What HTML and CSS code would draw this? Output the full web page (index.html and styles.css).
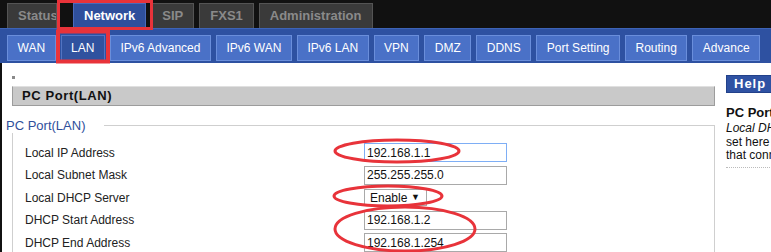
FILE: index.html
```html
<!DOCTYPE html>
<html lang="en">
<head>
    <meta charset="UTF-8">
    <title>Network - LAN</title>
    <link rel="stylesheet" href="styles.css">
</head>
<body>
    <div class="topbar">
        <a class="tab tab-first">Status</a>
        <a class="tab active">Network</a>
        <a class="tab">SIP</a>
        <a class="tab">FXS1</a>
        <a class="tab">Administration</a>
    </div>
    <div class="subnav">
        <a>WAN</a>
        <a class="current">LAN</a>
        <a>IPv6 Advanced</a>
        <a>IPv6 WAN</a>
        <a>IPv6 LAN</a>
        <a>VPN</a>
        <a>DMZ</a>
        <a>DDNS</a>
        <a>Port Setting</a>
        <a>Routing</a>
        <a>Advance</a>
    </div>
    <div class="page">
        <div class="main">
            <span class="bullet"></span>
            <div class="bar">PC Port(LAN)</div>
            <fieldset>
                <legend>PC Port(LAN)</legend>
                <div class="row">
                    <label for="ip">Local IP Address</label>
                    <input type="text" id="ip" class="focused" value="192.168.1.1">
                </div>
                <div class="row">
                    <label for="mask">Local Subnet Mask</label>
                    <input type="text" id="mask" value="255.255.255.0">
                </div>
                <div class="row">
                    <label for="dhcp">Local DHCP Server</label>
                    <span class="pick">
                        <select id="dhcp">
                            <option>Enable</option>
                            <option>Disable</option>
                        </select>
                    </span>
                </div>
                <div class="row">
                    <label for="start">DHCP Start Address</label>
                    <input type="text" id="start" value="192.168.1.2">
                </div>
                <div class="row">
                    <label for="end">DHCP End Address</label>
                    <input type="text" id="end" value="192.168.1.254">
                </div>
            </fieldset>
        </div>
        <div class="help">
            <div class="help-title">Help</div>
            <h4>PC Port(LAN)</h4>
            <p><i>Local DHCP Server:</i><br>set here the address pool for<br>that connect to the LAN port.</p>
            <div class="help-sep"></div>
        </div>
    </div>

    <!-- annotation marks drawn over the page -->
    <svg class="marks" width="771" height="252" viewBox="0 0 771 252">
        <g fill="none" stroke="#e8333a" stroke-width="3">
            <rect x="58.5" y="1.5" width="93" height="27"/>
            <rect x="58" y="31.5" width="50" height="30" stroke-width="4"/>
            <ellipse cx="397" cy="151" rx="62" ry="11"/>
            <ellipse cx="388" cy="196" rx="54" ry="10"/>
            <ellipse cx="405" cy="229" rx="70" ry="22"/>
        </g>
    </svg>
</body>
</html>
```

FILE: styles.css
```css
body { margin: 0; width: 771px; height: 252px; overflow: hidden; position: relative; background-color: #fff;
    font-family: "Liberation Sans", Arial, sans-serif; font-size: 12px; color: #222; }

/* top tabs */
.topbar { display: flex; align-items: flex-end; height: 28px; padding-left: 7px; background-color: #111; box-sizing: border-box; }
.tab { height: 25px; line-height: 24px; padding: 0 10px; margin-right: 5px; box-sizing: border-box;
    background-color: #3a3a3a; border: 1px solid #545454; border-bottom: none;
    color: #8a8a8a; font-size: 13px; font-weight: bold; white-space: nowrap; }
.tab-first { width: 50px; overflow: hidden; padding-right: 0; margin-right: 16px; }
.tab.active { background-color: #2f4f9c; border-color: #4a6abb; color: #fff; }

/* second row of menu */
.subnav { display: flex; height: 35px; padding: 6px 0 0 7px; box-sizing: border-box;
    background-color: #2e51a1; border-top: 1px solid #3d63b6; }
.subnav a { height: 26px; line-height: 24px; padding: 0 9.5px; margin-right: 5px; box-sizing: border-box;
    background-color: #4a71c7; border: 1px solid #6a8edb; color: #fff; font-size: 12px; white-space: nowrap; }
.subnav a.current { background-color: #30529f; border-color: #5174c2; }

.page { display: flex; height: 189px; border-left: 2px solid #111; }
.main { width: 703px; flex: none; padding: 13px 0 0 10px; }
.bullet { display: block; width: 3px; height: 3px; background-color: #8a8a8a; margin-bottom: 7px; }
.bar { height: 20px; line-height: 18px; padding-left: 9px; box-sizing: border-box;
    background-color: #c9c9c9; border: 1px solid #9c9c9c; border-top-color: #e0e0e0;
    color: #111; font-size: 13px; font-weight: bold; letter-spacing: 0.6px; }

fieldset { margin: 12px 0 0; padding: 10px 0 0 12px; border: 1px solid #cfcfcf; border-bottom: none; min-width: 0; }
legend { margin-left: -19px; padding: 0 19px 0 0; background-color: #fff; color: #2f4f9c; font-size: 13px; line-height: 15px; }

.row { display: flex; align-items: center; height: 19px; margin-bottom: 3.5px; }
label { width: 339px; flex: none; color: #222; }
input { width: 143px; height: 19px; box-sizing: border-box; margin: 0; padding: 0 2px;
    border: 1px solid #a9a9a9; font-family: inherit; font-size: 12px; color: #111; }
input.focused { border-color: #7eaef5; }
.pick { position: relative; display: inline-block; }
.pick select { appearance: none; -webkit-appearance: none; width: 63px; height: 17px; margin: 0; padding: 0 0 0 5px;
    border: 1px solid #a9a9a9; border-radius: 0; background-color: #fff; font-family: inherit; font-size: 12px; color: #111; }
.pick::after { content: "\25BC"; position: absolute; right: 7px; top: 3px; font-size: 9px; color: #111; pointer-events: none; }

/* help column, cut off by the window */
.help { margin-left: 11px; padding-top: 12px; width: 200px; flex: none; }
.help-title { width: 60px; height: 18px; line-height: 16px; padding-left: 7px; box-sizing: border-box;
    background-color: #2f52a3; border: 1px solid #22418a; color: #fff; font-size: 13px; font-weight: bold; letter-spacing: 1px; }
.help h4 { margin: 12px 0 0; font-size: 13px; line-height: 15px; color: #111; }
.help p { margin: 2px 0 0; line-height: 13.5px; color: #111; white-space: nowrap; }
.help-sep { margin-top: 4px; border-top: 1px dotted #bbb; }

.marks { position: absolute; left: 0; top: 0; pointer-events: none; }
```
